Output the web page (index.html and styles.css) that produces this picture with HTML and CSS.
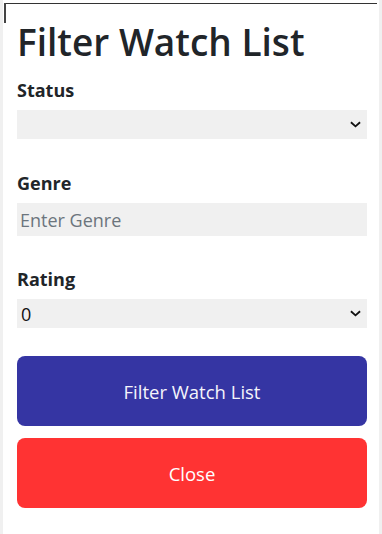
FILE: index.html
```html
<!DOCTYPE html>
<html lang="en">
<head>
    <meta charset="UTF-8">
    <title>Filter Watch List</title>
    <link rel="stylesheet" href="styles.css">
</head>
<body>
    <div class="panel">
        <div class="top-line"></div>
        <span class="caret"></span>
        <div class="content">
            <h1>Filter Watch List</h1>

            <div class="field first">
                <label for="status">Status</label>
                <div class="select-wrap">
                    <select id="status">
                        <option value=""></option>
                        <option value="watching">Watching</option>
                        <option value="completed">Completed</option>
                        <option value="planned">Plan to Watch</option>
                    </select>
                    <svg class="chevron" viewBox="0 0 12 7"><path d="M1 1l5 4.5L11 1" fill="none" stroke="#111" stroke-width="2"/></svg>
                </div>
            </div>

            <div class="field">
                <label for="genre">Genre</label>
                <input type="text" id="genre" placeholder="Enter Genre">
            </div>

            <div class="field last">
                <label for="rating">Rating</label>
                <div class="select-wrap">
                    <select id="rating">
                        <option value="0">0</option>
                        <option value="1">1</option>
                        <option value="2">2</option>
                        <option value="3">3</option>
                        <option value="4">4</option>
                        <option value="5">5</option>
                    </select>
                    <svg class="chevron" viewBox="0 0 12 7"><path d="M1 1l5 4.5L11 1" fill="none" stroke="#111" stroke-width="2"/></svg>
                </div>
            </div>

            <button class="btn btn-filter">Filter Watch List</button>
            <button class="btn btn-close">Close</button>
        </div>
    </div>
</body>
</html>
```

FILE: styles.css
```css
* {
    margin: 0;
    padding: 0;
    box-sizing: border-box;
}

body {
    font-family: 'Open Sans', sans-serif;
    background-color: #f0f0f0;
    color: #212529;
}

.panel {
    position: relative;
    margin-left: 3px;
    width: 376px;
    min-height: 100vh;
    background-color: white;
    padding-top: 3px;
}

.top-line {
    height: 1px;
    margin: 0 2px 0 1px;
    background-color: #333;
}

.caret {
    position: absolute;
    left: 1px;
    top: 3px;
    width: 2px;
    height: 20px;
    background-color: #444;
}

.content {
    padding: 0 12px 0 14px;
}

h1 {
    font-size: 37px;
    font-weight: 600;
    line-height: 1.2;
    margin-top: 16px;
    margin-bottom: 14px;
}

.field {
    margin-bottom: 31px;
}

.field.first {
    margin-bottom: 32px;
}

.field.last {
    margin-bottom: 28px;
}

.field label {
    display: block;
    font-size: 18px;
    font-weight: 700;
    line-height: 24px;
    margin-bottom: 8px;
}

.select-wrap {
    position: relative;
}

select,
input {
    display: block;
    width: 100%;
    border: none;
    outline: none;
    background-color: #f0f0f0;
    font-family: inherit;
    font-size: 18px;
    color: #111;
    padding: 0 4px;
    appearance: none;
}

select {
    height: 29px;
}

input {
    height: 33px;
    padding-left: 3px;
}

input::placeholder {
    color: #6c757d;
}

.chevron {
    position: absolute;
    right: 6px;
    top: 11px;
    width: 11px;
    height: 7px;
    pointer-events: none;
}

.btn {
    display: block;
    width: 100%;
    height: 70px;
    border: none;
    border-radius: 8px;
    font-family: inherit;
    font-size: 18.5px;
    color: #f4f4fb;
    cursor: pointer;
    margin-bottom: 12px;
}

.btn-filter {
    background-color: #3535a3;
}

.btn-close {
    background-color: #ff3333;
    color: white;
}
```
